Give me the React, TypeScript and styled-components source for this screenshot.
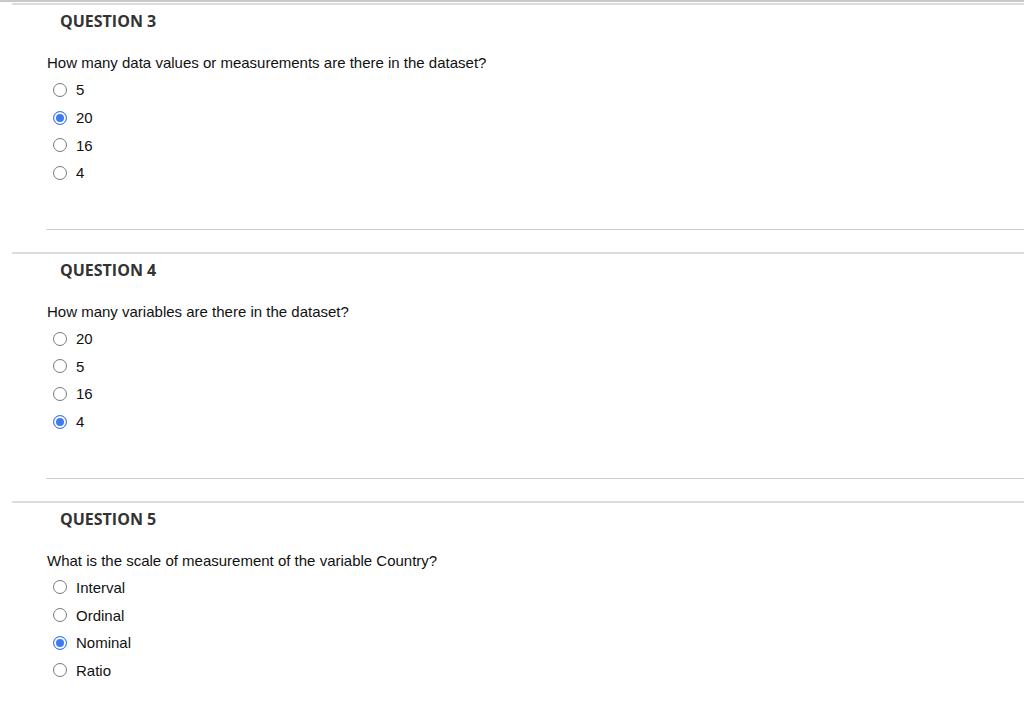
import React from "react";
import styled, { createGlobalStyle } from "styled-components";

const Global = createGlobalStyle`
  html, body { margin: 0; padding: 0; background: #fff; }
  body { font-family: "Liberation Sans", Arial, sans-serif; }
`;

const TopRule = styled.div`
  height: 2px;
  background: #c9c9c9;
  margin-bottom: 1px;
`;

const List = styled.div`
  padding-left: 12px;
`;

const Block = styled.section`
  border-top: 2px solid #dcdcdc;
  padding-top: 6px;
  margin-bottom: 22px;
`;

const Heading = styled.h3`
  margin: 0 0 0 48px;
  font-family: "Open Sans", sans-serif;
  font-weight: 700;
  font-size: 16px;
  line-height: 20px;
  color: #333;
`;

const Body = styled.div`
  margin-left: 34px;
  padding-top: 22px;
  padding-bottom: 42px;
  border-bottom: 1px solid #cfcfcf;
`;

const Prompt = styled.div`
  font-size: 15px;
  line-height: 20px;
  color: #111;
  padding-left: 1px;
  margin-bottom: 3px;
`;

const Option = styled.label`
  display: flex;
  align-items: center;
  height: 27.7px;
  font-size: 15px;
  color: #111;
`;

const Radio = styled.span<{ $on?: boolean }>`
  box-sizing: border-box;
  width: 14px;
  height: 14px;
  margin-left: 7px;
  margin-right: 9px;
  border-radius: 50%;
  border: 1px solid ${(p) => (p.$on ? "#3e7bf3" : "#7a7a7a")};
  background: ${(p) => (p.$on ? "#3e7bf3" : "#fff")};
  box-shadow: ${(p) => (p.$on ? "inset 0 0 0 2px #fff" : "none")};
`;

type Q = { n: number; text: string; options: string[]; chosen: number };

const questions: Q[] = [
  {
    n: 3,
    text: "How many data values or measurements are there in the dataset?",
    options: ["5", "20", "16", "4"],
    chosen: 1,
  },
  {
    n: 4,
    text: "How many variables are there in the dataset?",
    options: ["20", "5", "16", "4"],
    chosen: 3,
  },
  {
    n: 5,
    text: "What is the scale of measurement of the variable Country?",
    options: ["Interval", "Ordinal", "Nominal", "Ratio"],
    chosen: 2,
  },
];

export default function App() {
  return (
    <>
      <Global />
      <TopRule />
      <List>
        {questions.map((q) => (
          <Block key={q.n}>
            <Heading>QUESTION {q.n}</Heading>
            <Body>
              <Prompt>{q.text}</Prompt>
              {q.options.map((o, i) => (
                <Option key={o}>
                  <Radio $on={i === q.chosen} />
                  {o}
                </Option>
              ))}
            </Body>
          </Block>
        ))}
      </List>
    </>
  );
}
